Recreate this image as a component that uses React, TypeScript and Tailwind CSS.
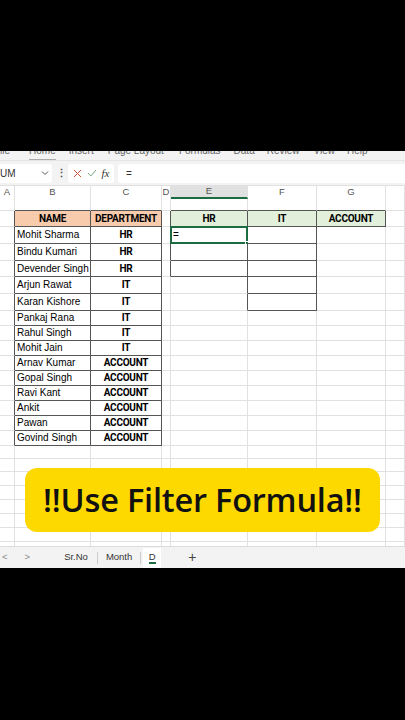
import React from 'react';

const widths = ['w-[15px]', 'w-[76px]', 'w-[71px]', 'w-[9px]', 'w-[77px]', 'w-[69px]', 'w-[69px]', 'flex-1'];
const letters = ['A', 'B', 'C', 'D', 'E', 'F', 'G', ''];

const people: [string, string][] = [
  ['Mohit Sharma', 'HR'],
  ['Bindu Kumari', 'HR'],
  ['Devender Singh', 'HR'],
  ['Arjun Rawat', 'IT'],
  ['Karan Kishore', 'IT'],
  ['Pankaj Rana', 'IT'],
  ['Rahul Singh', 'IT'],
  ['Mohit Jain', 'IT'],
  ['Arnav Kumar', 'ACCOUNT'],
  ['Gopal Singh', 'ACCOUNT'],
  ['Ravi Kant', 'ACCOUNT'],
  ['Ankit', 'ACCOUNT'],
  ['Pawan', 'ACCOUNT'],
  ['Govind Singh', 'ACCOUNT'],
];

// row heights (px classes written out)
const rowHeights = [
  'h-[12px]', 'h-[16px]',
  'h-[17px]', 'h-[17px]', 'h-[16px]', 'h-[17px]', 'h-[17px]',
  'h-[15px]', 'h-[15px]', 'h-[15px]', 'h-[15px]', 'h-[15px]', 'h-[15px]', 'h-[15px]', 'h-[15px]', 'h-[15px]',
  'h-[13px]', 'h-[13px]', 'h-[14px]', 'h-[14px]', 'h-[14px]', 'h-[14px]', 'h-[14px]', 'h-[14px]',
];

const ribbonTabs: [string, string][] = [
  ['ile', 'ml-0'],
  ['Home', 'ml-[19px]'],
  ['Insert', 'ml-[13px]'],
  ['Page Layout', 'ml-[14px]'],
  ['Formulas', 'ml-[15px]'],
  ['Data', 'ml-[13px]'],
  ['Review', 'ml-[12px]'],
  ['View', 'ml-[14px]'],
  ['Help', 'ml-[12px]'],
];

const boxed = (r: number, c: number) => {
  if (r >= 1 && r <= 15 && (c === 1 || c === 2)) return true;
  if (r === 1 && c >= 4 && c <= 6) return true;
  if (c === 4 && r >= 2 && r <= 4) return true;
  if (c === 5 && r >= 2 && r <= 6) return true;
  return false;
};

const Cell: React.FC<{ r: number; c: number }> = ({ r, c }) => {
  const darkR = boxed(r, c) || boxed(r, c + 1);
  const darkB = boxed(r, c) || boxed(r + 1, c);
  let text = '';
  let bg = '';
  let bold = false;
  if (r === 1 && c === 1) { text = 'NAME'; bg = 'bg-[#f8cbad]'; bold = true; }
  if (r === 1 && c === 2) { text = 'DEPARTMENT'; bg = 'bg-[#f8cbad]'; bold = true; }
  if (r === 1 && c === 4) { text = 'HR'; bg = 'bg-[#e2efda]'; bold = true; }
  if (r === 1 && c === 5) { text = 'IT'; bg = 'bg-[#e2efda]'; bold = true; }
  if (r === 1 && c === 6) { text = 'ACCOUNT'; bg = 'bg-[#e2efda]'; bold = true; }
  if (r >= 2 && r <= 15 && c === 1) text = people[r - 2][0];
  if (r >= 2 && r <= 15 && c === 2) { text = people[r - 2][1]; bold = true; }
  const selected = r === 2 && c === 4;
  if (selected) text = '=';
  return (
    <div
      className={`relative shrink-0 ${widths[c]} h-full flex items-center overflow-visible border-r border-b ${darkR ? 'border-r-[#555555]' : 'border-r-[#e1e1e1]'} ${darkB ? 'border-b-[#555555]' : 'border-b-[#e1e1e1]'} ${bg} ${bold ? 'justify-center' : 'pl-[2px]'}`}
    >
      <span
        className={`whitespace-nowrap leading-none text-black ${bold ? 'font-bold text-[10px] tracking-[-0.25px] font-[Roboto]' : 'text-[10px]'}`}
      >
        {text}
      </span>
      {selected && (
        <div className="absolute -left-[1px] -top-[1px] -right-[1px] -bottom-[1px] border-2 border-[#1d6b40]">
          <div className="absolute -right-[3px] -bottom-[3px] w-[4px] h-[4px] bg-[#1d6b40] border border-white" />
        </div>
      )}
    </div>
  );
};

const App: React.FC = () => {
  return (
    <div className="w-[405px] h-[720px] bg-black overflow-hidden" style={{ fontFamily: '"Liberation Sans", Arial, sans-serif' }}>
      <div className="h-[146px]" />

      {/* ribbon tabs, top cut off by the black bar */}
      <div className="relative h-[14px] bg-[#f3f3f3] overflow-hidden">
        <div className="absolute left-0 right-0 top-0 h-[5px] bg-black z-10" />
        <div className="flex items-start text-[10px] text-[#666] -mt-[3px] whitespace-nowrap">
          {ribbonTabs.map(([t, m]) => (
            <span key={t} className={`${m} ${t === 'Home' ? 'border-b border-[#aaa] pb-[1px]' : ''}`}>{t}</span>
          ))}
        </div>
      </div>

      {/* formula bar */}
      <div className="h-[25px] bg-[#f3f3f3] flex items-center gap-[4px] border-t border-[#e4e4e4]">
        <div className="w-[52px] h-[19px] bg-white rounded-r-[3px] flex items-center justify-between pr-[3px] text-[10px] text-[#333]">
          <span>UM</span>
          <svg width="8" height="6" viewBox="0 0 8 6"><path d="M1 1.5 L4 4.5 L7 1.5" fill="none" stroke="#555" strokeWidth="1" /></svg>
        </div>
        <span className="text-[11px] text-[#555] font-bold w-[8px] text-center">⋮</span>
        <div className="w-[46px] h-[19px] bg-white rounded-[3px] flex items-center justify-around px-[2px]">
          <svg width="9" height="9" viewBox="0 0 9 9"><path d="M1 1 L8 8 M8 1 L1 8" stroke="#c9503a" strokeWidth="1" /></svg>
          <svg width="10" height="8" viewBox="0 0 10 8"><path d="M1 4 L3.8 7 L9 1" fill="none" stroke="#76a77f" strokeWidth="1" /></svg>
          <span className="text-[11px] italic text-[#333]" style={{ fontFamily: '"Liberation Serif", serif' }}>fx</span>
        </div>
        <div className="flex-1 h-[19px] bg-white rounded-l-[3px] flex items-center pl-[8px] text-[10px] text-[#333]">=</div>
      </div>

      {/* column header */}
      <div className="h-[14px] bg-white flex text-[9.5px] text-[#555] border-t border-[#e0e0e0]">
        {letters.map((l, i) => (
          <div
            key={i}
            className={`shrink-0 ${widths[i]} h-full flex items-center justify-center border-r border-[#e1e1e1] ${i === 4 ? 'bg-[#e1e1e1] border-b-2 border-b-[#1d6b40]' : ''}`}
          >
            {l}
          </div>
        ))}
      </div>

      {/* sheet grid + banner */}
      <div className="relative h-[347px] bg-white overflow-hidden">
        {rowHeights.map((h, r) => (
          <div key={r} className={`flex ${h}`}>
            {widths.map((_, c) => <Cell key={c} r={r} c={c} />)}
          </div>
        ))}
        <div className="absolute left-[25px] top-[269px] w-[355px] h-[64px] rounded-[12px] bg-[#fed900] flex items-center justify-center">
          <span className="text-[32.5px] font-semibold text-[#111] tracking-[-0.2px]" style={{ fontFamily: '"Open Sans", sans-serif' }}>!!Use Filter Formula!!</span>
        </div>
      </div>

      {/* sheet tabs */}
      <div className="h-[22px] bg-[#f3f3f3] border-t border-[#dcdcdc] flex items-center text-[9.5px] text-[#333]">
        <span className="ml-[2px] text-[#888]">&lt;</span>
        <span className="ml-[17px] text-[#888]">&gt;</span>
        <span className="ml-[34px]">Sr.No</span>
        <span className="ml-[9px] w-px h-[12px] bg-[#ccc]" />
        <span className="ml-[8px]">Month</span>
        <span className="ml-[8px] w-px h-[12px] bg-[#ccc]" />
        <div className="ml-[2px] w-[18px] h-[20px] bg-white flex flex-col items-center justify-center rounded-b-[2px]">
          <span className="leading-none">D</span>
          <span className="w-[7px] h-[1.5px] bg-[#1d6b40] mt-[1px]" />
        </div>
        <span className="ml-[27px] text-[14px] text-[#444] font-light">+</span>
      </div>
    </div>
  );
};

export default App;
